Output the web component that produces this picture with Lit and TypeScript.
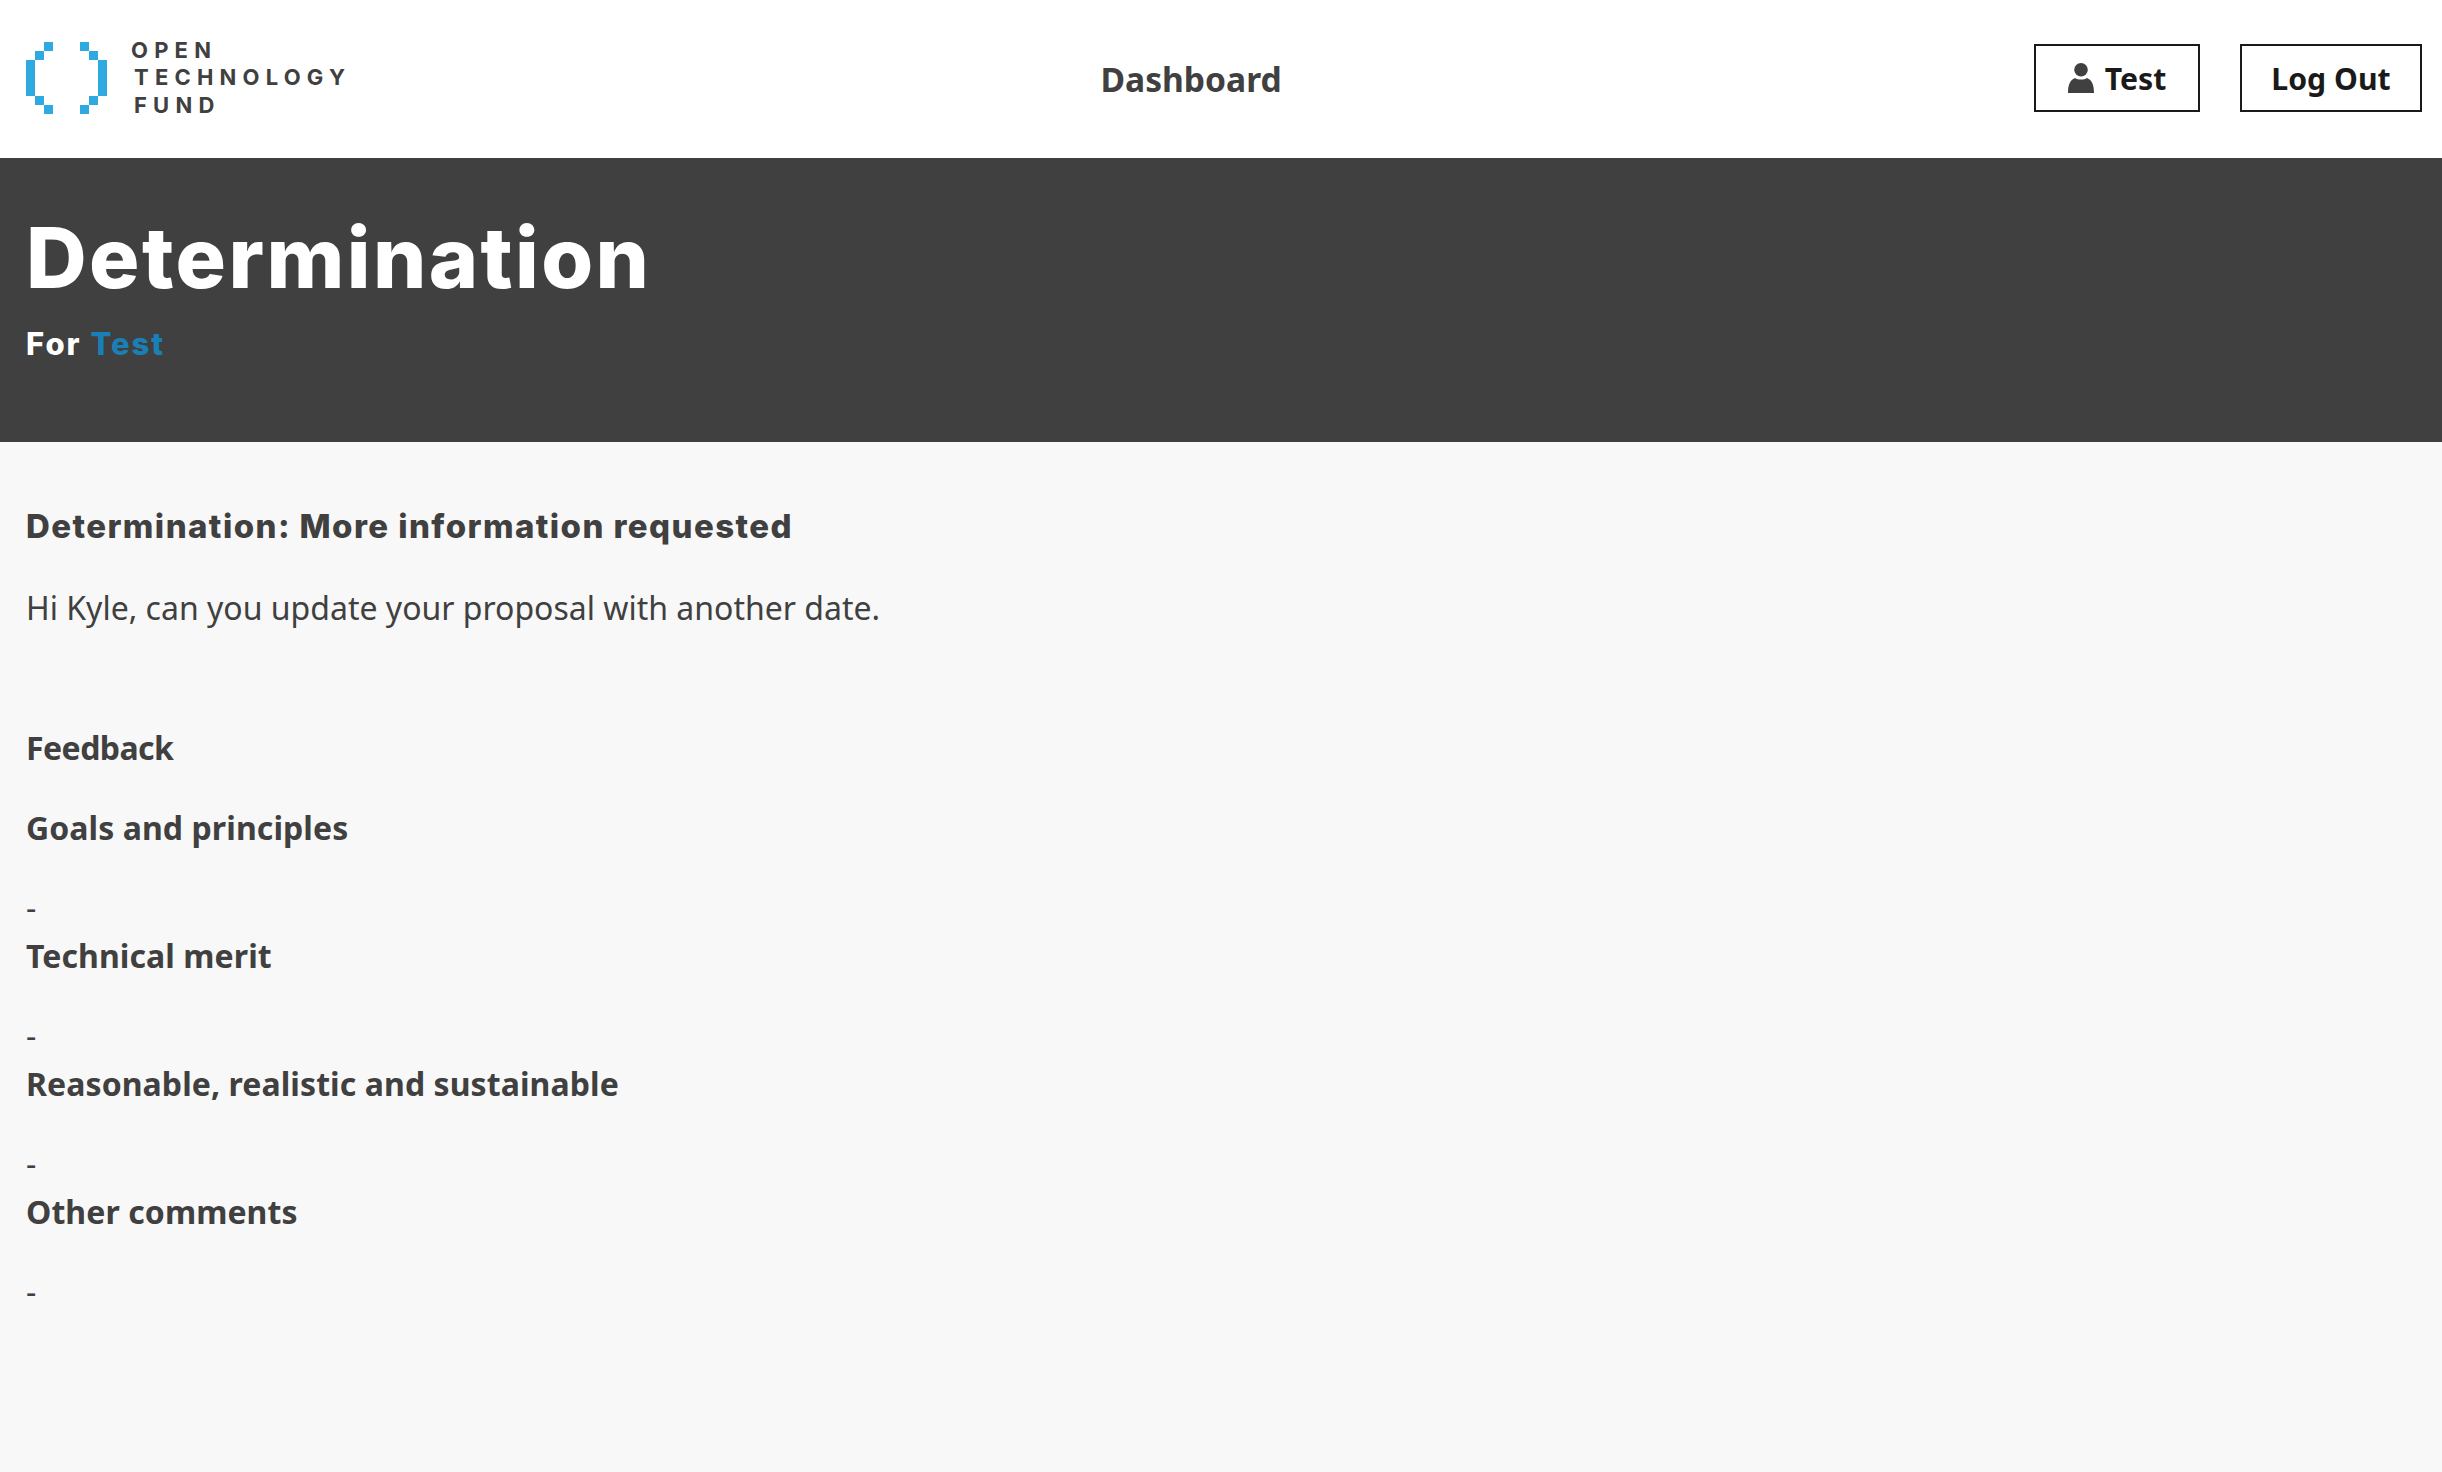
import { LitElement, html, css } from "lit";
import { customElement } from "lit/decorators.js";

@customElement("app-root")
export class AppRoot extends LitElement {
  static styles = css`
    :host { display: block; min-height: 1472px; background: #f8f8f8; color: #404040; font-family: "Noto Sans", "Open Sans", sans-serif; }
    header { height: 158px; background: #fff; display: flex; align-items: center; justify-content: space-between; padding: 0 20px 2px 26px; box-sizing: border-box; }
    .logo { display: flex; align-items: center; gap: 24px; color: #404040; }
    .logo svg { display: block; width: 81px; height: 72px; }
    .logo-text { font-family: Inter, sans-serif; font-weight: 700; font-size: 22px; line-height: 27.5px; letter-spacing: 6.2px; }
    .ind { padding-left: 3px; }
    .nav { font-size: 33.6px; font-weight: 700; color: #404040; margin: 2px 3px 0 0; }
    .buttons { display: flex; gap: 40px; }
    .btn { height: 68px; box-sizing: border-box; border: 2px solid #1a1a1a; display: flex; align-items: center; justify-content: center; gap: 11px; font-size: 30.2px; font-weight: 700; color: #1a1a1a; background: #fff; }
    .btn.user { width: 166px; }
    .btn.out { width: 182px; }
    .btn svg { width: 26px; height: 30px; display: block; }
    .hero { height: 284px; background: #404040; color: #fff; padding: 0 26px; box-sizing: border-box; font-family: Inter, sans-serif; }
    .hero h1 { margin: 0; padding-top: 54px; font-size: 84px; line-height: 92px; font-weight: 800; letter-spacing: 2.4px; }
    .hero p { margin: 20px 0 0; font-size: 31px; line-height: 40px; font-weight: 800; letter-spacing: 2px; }
    .hero a { color: #1a7fb5; }
    main { padding: 0 26px; }
    h2 { margin: 0; padding-top: 64px; font-family: Inter, sans-serif; font-size: 33px; line-height: 40px; font-weight: 800; letter-spacing: 1.42px; }
    .msg { margin: 42px 0 0; font-size: 32px; line-height: 40px; color: #404040; }
    h3 { margin: 0; font-size: 32px; line-height: 40px; font-weight: 700; letter-spacing: 0.08px; }
    .feedback { margin-top: 100px; letter-spacing: -0.55px; }
    .group { margin-top: 40px; }
    .group + .group { margin-top: 8px; }
    .dash { margin-top: 40px; font-size: 32px; line-height: 40px; }
  `;

  render() {
    const groups = ["Goals and principles", "Technical merit", "Reasonable, realistic and sustainable", "Other comments"];
    return html`
      <header>
        <div class="logo">
          <svg viewBox="0 0 81 72" shape-rendering="crispEdges" fill="#2eaae1">
            <path d="M18 0h9v9h-9zM9 9h9v9H9zM0 18h9v36H0zM9 54h9v9H9zM18 63h9v9h-9zM54 0h9v9h-9zM63 9h9v9h-9zM72 18h9v36h-9zM63 54h9v9h-9zM54 63h9v9h-9z" />
          </svg>
          <div class="logo-text"><div>OPEN</div><div class="ind">TECHNOLOGY</div><div class="ind">FUND</div></div>
        </div>
        <div class="nav">Dashboard</div>
        <div class="buttons">
          <div class="btn user">
            <svg viewBox="0 0 26 30" fill="#404040"><circle cx="13" cy="6.8" r="6.8" /><path d="M0 30c0-8 2-13 7-15 3 2 9 2 12 0 5 2 7 7 7 15z" /></svg>
            <span>Test</span>
          </div>
          <div class="btn out">Log Out</div>
        </div>
      </header>
      <section class="hero">
        <h1>Determination</h1>
        <p>For <a>Test</a></p>
      </section>
      <main>
        <h2>Determination: More information requested</h2>
        <p class="msg">Hi Kyle, can you update your proposal with another date.</p>
        <h3 class="feedback">Feedback</h3>
        ${groups.map((g) => html`<div class="group"><h3>${g}</h3><div class="dash">-</div></div>`)}
      </main>
    `;
  }
}
